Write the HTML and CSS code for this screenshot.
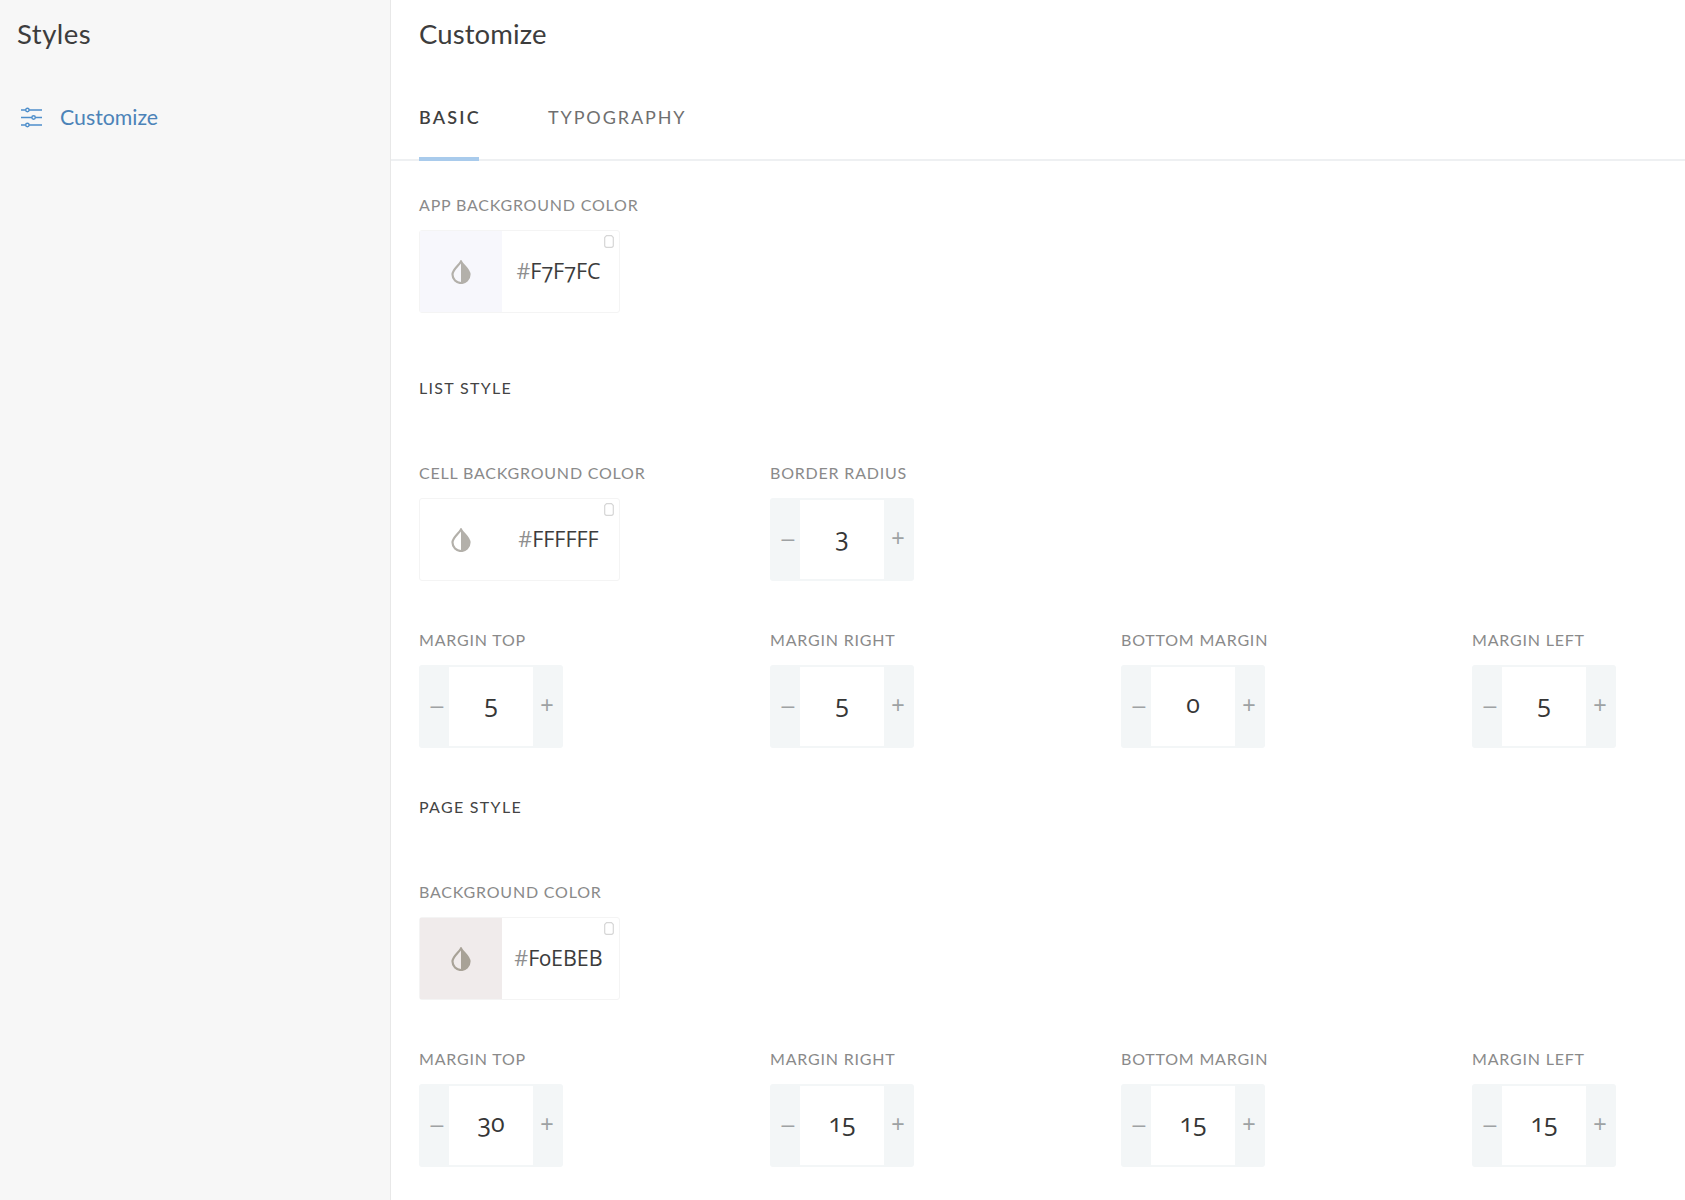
FILE: index.html
```html
<!DOCTYPE html>
<html lang="en">
<head>
  <meta charset="UTF-8">
  <title>Styles - Customize</title>
  <link rel="stylesheet" href="styles.css">
</head>
<body>
  <svg class="icon-defs" width="0" height="0">
    <symbol id="drop" viewBox="0 0 20 24">
      <path d="M10 1.500C7.500 6 1.500 9.500 1.500 14.500a8.500 8.500 0 0 0 17 0C18.500 9.500 12.500 6 10 1.500z" fill="none" stroke="currentColor" stroke-width="2.200"/>
      <path d="M10 1.500C12.500 6 18.500 9.500 18.500 14.500a8.500 8.500 0 0 1-8.500 8.500z" fill="currentColor"/>
    </symbol>
    <symbol id="copy" viewBox="0 0 10 13">
      <path d="M2.500.7h5L9.300 2.500v8a1.800 1.800 0 0 1-1.800 1.800h-5A1.800 1.800 0 0 1 .7 10.500v-8z" fill="none" stroke="currentColor" stroke-width="1.200"/>
    </symbol>
  </svg>

  <div class="app">
    <!-- Sidebar -->
    <aside class="sidebar">
      <h1 class="page-title">Styles</h1>
      <a class="side-link">
        <svg class="sliders" viewBox="0 0 21 21" fill="none" stroke="currentColor" stroke-width="1.400">
          <path d="M0 3h4.800M8 3h13M0 10.500h11M14.200 10.500H21M0 18h4.800M8 18h13"/>
          <circle cx="6.400" cy="3" r="1.700"/>
          <circle cx="12.600" cy="10.500" r="1.700"/>
          <circle cx="6.400" cy="18" r="1.700"/>
        </svg>
        Customize
      </a>
    </aside>

    <!-- Main panel -->
    <main class="main">
      <h1 class="page-title">Customize</h1>
      <div class="tabs">
        <div class="tab active">BASIC</div>
        <div class="tab">TYPOGRAPHY</div>
      </div>

      <div class="pane">
        <div class="row row-lead">
          <div class="field">
            <label>APP BACKGROUND COLOR</label>
            <div class="color-box">
              <div class="swatch swatch-app"><svg class="drop"><use href="#drop"/></svg></div>
              <div class="hex"><span>#</span>F7F7FC</div>
              <svg class="copy"><use href="#copy"/></svg>
            </div>
          </div>
        </div>

        <h3 class="heading">LIST STYLE</h3>
        <div class="row">
          <div class="field">
            <label>CELL BACKGROUND COLOR</label>
            <div class="color-box">
              <div class="swatch"><svg class="drop"><use href="#drop"/></svg></div>
              <div class="hex"><span>#</span>FFFFFF</div>
              <svg class="copy"><use href="#copy"/></svg>
            </div>
          </div>
          <div class="field">
            <label>BORDER RADIUS</label>
            <div class="stepper"><button>–</button><div class="num">3</div><button>+</button></div>
          </div>
        </div>
        <div class="row">
          <div class="field">
            <label>MARGIN TOP</label>
            <div class="stepper"><button>–</button><div class="num">5</div><button>+</button></div>
          </div>
          <div class="field">
            <label>MARGIN RIGHT</label>
            <div class="stepper"><button>–</button><div class="num">5</div><button>+</button></div>
          </div>
          <div class="field">
            <label>BOTTOM MARGIN</label>
            <div class="stepper"><button>–</button><div class="num">0</div><button>+</button></div>
          </div>
          <div class="field">
            <label>MARGIN LEFT</label>
            <div class="stepper"><button>–</button><div class="num">5</div><button>+</button></div>
          </div>
        </div>

        <h3 class="heading">PAGE STYLE</h3>
        <div class="row">
          <div class="field">
            <label>BACKGROUND COLOR</label>
            <div class="color-box">
              <div class="swatch swatch-page"><svg class="drop"><use href="#drop"/></svg></div>
              <div class="hex"><span>#</span>F0EBEB</div>
              <svg class="copy"><use href="#copy"/></svg>
            </div>
          </div>
        </div>
        <div class="row">
          <div class="field">
            <label>MARGIN TOP</label>
            <div class="stepper"><button>–</button><div class="num">30</div><button>+</button></div>
          </div>
          <div class="field">
            <label>MARGIN RIGHT</label>
            <div class="stepper"><button>–</button><div class="num">15</div><button>+</button></div>
          </div>
          <div class="field">
            <label>BOTTOM MARGIN</label>
            <div class="stepper"><button>–</button><div class="num">15</div><button>+</button></div>
          </div>
          <div class="field">
            <label>MARGIN LEFT</label>
            <div class="stepper"><button>–</button><div class="num">15</div><button>+</button></div>
          </div>
        </div>
      </div>
    </main>
  </div>
</body>
</html>
```

FILE: styles.css
```css
/* Reset and Base Styles */
* {
  margin: 0;
  padding: 0;
  box-sizing: border-box;
}

body {
  font-family: Lato, "Open Sans", sans-serif;
  color: #3c3c3c;
  background: #ffffff;
  height: 100vh;
  overflow: hidden;
}

.icon-defs {
  position: absolute;
}

.app {
  display: flex;
  height: 100%;
}

.page-title {
  font-size: 27.500px;
  font-weight: 400;
  letter-spacing: 0.100px;
  line-height: 34px;
  padding-top: 17px;
  color: #3d3d3d;
}

/* Sidebar */
.sidebar {
  width: 391px;
  flex-shrink: 0;
  padding-left: 17px;
  background: #f7f7f7;
  border-right: 1px solid #e8e8e8;
}

.sidebar .page-title {
  letter-spacing: 0.500px;
}

.side-link {
  display: flex;
  align-items: center;
  gap: 18px;
  margin-top: 49px;
  margin-left: 4px;
  height: 34px;
  font-size: 21.300px;
  color: #4c83b8;
}

.sliders {
  width: 21px;
  height: 21px;
  color: #4f8fcb;
}

/* Main panel */
.main {
  flex: 1;
  min-width: 0;
}

.main .page-title {
  padding-left: 28px;
}

.tabs {
  display: flex;
  gap: 69px;
  margin-top: 32px;
  padding-left: 28px;
  height: 78px;
  border-bottom: 2px solid #eef0f2;
}

.tab {
  height: 78px;
  padding-top: 22px;
  font-size: 18px;
  line-height: 24px;
  letter-spacing: 1.900px;
  color: #6f6f6f;
}

.tab.active {
  width: 60px;
  font-weight: 600;
  letter-spacing: 2.200px;
  color: #3f3f3f;
  border-bottom: 4px solid #a9cbec;
}

.pane {
  padding: 34px 0 0 28px;
}

.row {
  display: grid;
  grid-template-columns: repeat(3, 351px) auto;
  margin-bottom: 49px;
}

.row-lead {
  margin-bottom: 65px;
}

.heading {
  font-size: 16px;
  font-weight: 400;
  line-height: 20px;
  letter-spacing: 1.300px;
  color: #444444;
  margin-bottom: 65px;
}

.field label {
  display: block;
  font-size: 16px;
  line-height: 20px;
  letter-spacing: 0.800px;
  color: #8a8a8a;
  margin-bottom: 15px;
}

/* Colour picker box */
.color-box {
  display: flex;
  position: relative;
  width: 201px;
  height: 83px;
  background: #fff;
  border: 1px solid #f4f4f4;
  border-radius: 3px;
}

.swatch {
  width: 82px;
  display: flex;
  align-items: center;
  justify-content: center;
  color: #b3b0aa;
}

.swatch-app {
  background: #f7f7fc;
}

.swatch-page {
  background: #f0ebeb;
  color: #a8a297;
}

.drop {
  width: 20px;
  height: 24px;
  margin-left: -1px;
  margin-top: 1px;
}

.hex {
  flex: 1;
  padding-right: 4px;
  text-align: center;
  font-family: "Open Sans", Lato, sans-serif;
  font-variant-numeric: oldstyle-nums;
  font-size: 21.500px;
  font-weight: 500;
  line-height: 80px;
  color: #3c3c3c;
}

.hex span {
  color: #8f8f8f;
  font-weight: 400;
}

.copy {
  position: absolute;
  top: 4px;
  right: 5px;
  width: 10px;
  height: 13px;
  color: #d6d6d6;
}

/* Number stepper */
.stepper {
  display: flex;
  width: 144px;
  height: 83px;
  background: #f3f6f7;
  border-radius: 3px;
}

.stepper button {
  width: 30px;
  border: none;
  background: transparent;
  font-family: "Liberation Sans", sans-serif;
  font-size: 23px;
  line-height: 1;
  color: #9ea2a4;
  padding-bottom: 2px;
}

.stepper button:first-child {
  padding-left: 6px;
}

.stepper button:last-child {
  padding-right: 2px;
}

.stepper .num {
  flex: 1;
  margin: 2px 0;
  background: #ffffff;
  text-align: center;
  font-family: "Open Sans", Lato, sans-serif;
  font-variant-numeric: oldstyle-nums;
  font-size: 25px;
  font-weight: 500;
  line-height: 72px;
  color: #363636;
}
```
